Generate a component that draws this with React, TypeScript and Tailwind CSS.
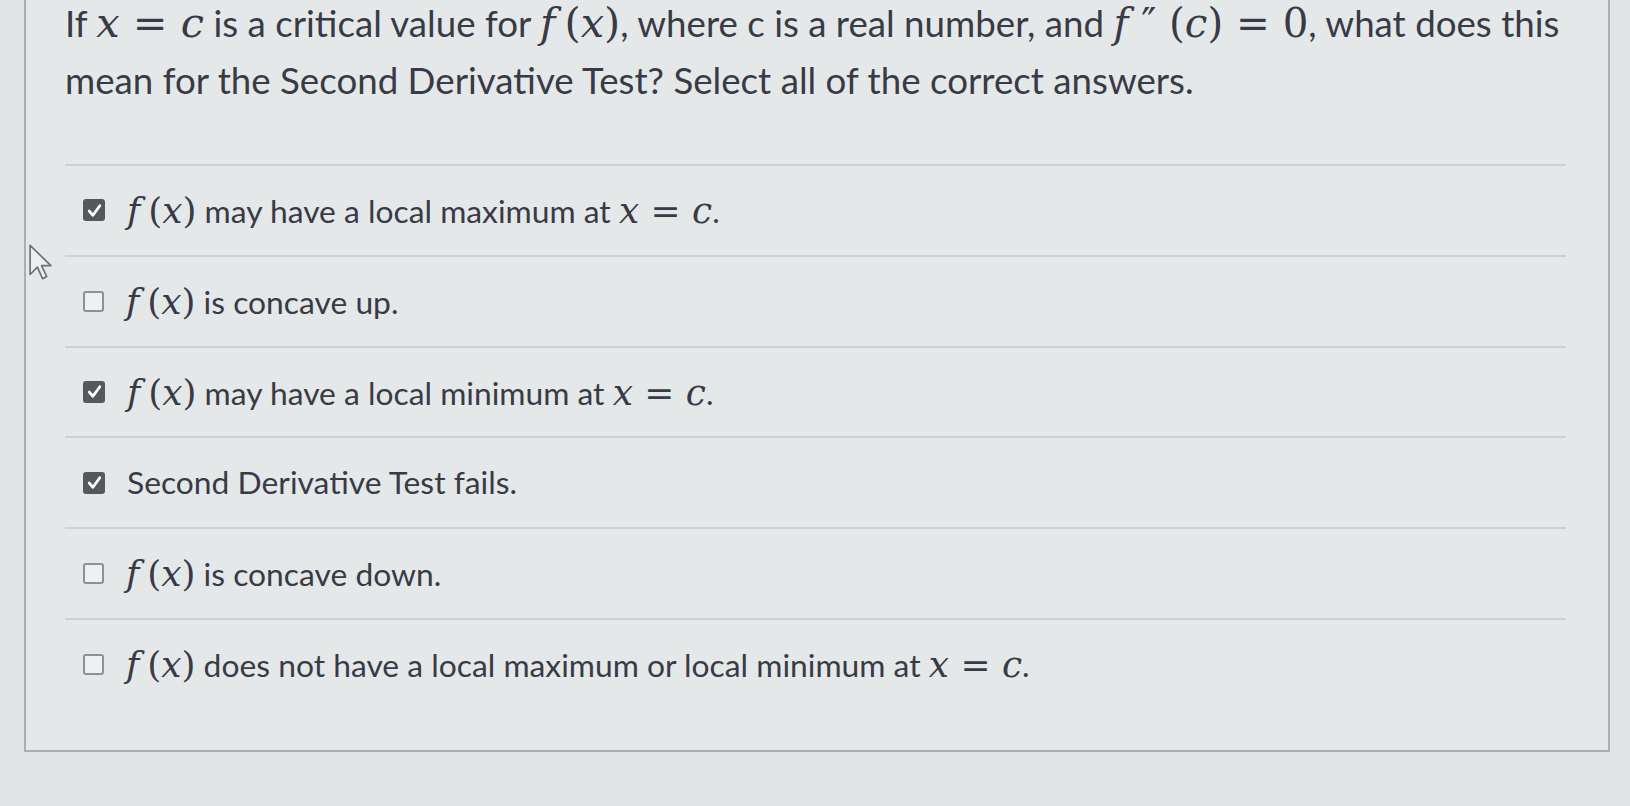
import React from "react";

const sans = "font-['Lato','Noto_Sans',sans-serif]";

function V({ children }: { children: React.ReactNode }) {
  return <span className="font-['DejaVu_Serif','Liberation_Serif',serif] italic">{children}</span>;
}

function Up({ children }: { children: React.ReactNode }) {
  return <span className="font-['DejaVu_Serif','Liberation_Serif',serif]">{children}</span>;
}

function Fx() {
  return (
    <span className="whitespace-nowrap text-[1.13em]">
      <V>f</V>
      <span className="inline-block w-[0.22em]" />
      <Up>(</Up>
      <V>x</V>
      <Up>)</Up>
    </span>
  );
}

function XeqC() {
  return (
    <span className="whitespace-nowrap text-[1.13em]">
      <V>x</V>
      <Up> = </Up>
      <V>c</V>
    </span>
  );
}

function Checkbox({ checked }: { checked: boolean }) {
  if (checked) {
    return (
      <span className="flex h-[22px] w-[22px] shrink-0 items-center justify-center rounded-[3px] bg-[#55595e]">
        <svg viewBox="0 0 16 16" className="h-[17px] w-[17px]">
          <path d="M3 8.5 L6.5 12.5 L13 3.5" fill="none" stroke="#ffffff" strokeWidth="2.6" strokeLinecap="round" strokeLinejoin="round" />
        </svg>
      </span>
    );
  }
  return <span className="h-[21px] w-[21px] shrink-0 rounded-[3px] border-2 border-[#8d9196] bg-[#eef0f1]" />;
}

const options: { checked: boolean; label: React.ReactNode }[] = [
  {
    checked: true,
    label: (
      <>
        <Fx /> may have a local maximum at <XeqC />.
      </>
    ),
  },
  {
    checked: false,
    label: (
      <>
        <Fx /> is concave up.
      </>
    ),
  },
  {
    checked: true,
    label: (
      <>
        <Fx /> may have a local minimum at <XeqC />.
      </>
    ),
  },
  { checked: true, label: <>Second Derivative Test fails.</> },
  {
    checked: false,
    label: (
      <>
        <Fx /> is concave down.
      </>
    ),
  },
  {
    checked: false,
    label: (
      <>
        <Fx /> does not have a local maximum or local minimum at <XeqC />.
      </>
    ),
  },
];

export default function App() {
  return (
    <div className={`relative h-[806px] w-[1630px] overflow-hidden bg-[#e1e4e5] ${sans}`}>
      <div className="ml-[24px] mr-[20px] h-[759px] border-x-2 border-b-2 border-[#a9aeb4] bg-[#e5e8e9] pl-[39px] pr-[20px]">
        <p className="-mt-[7px] whitespace-nowrap text-[36.7px] leading-[57px] text-[#383b46]">
          If <XeqC /> is a critical value for <Fx />, where c is a real number, and{" "}
          <span className="whitespace-nowrap text-[1.1em]">
            <V>f</V>
            <Up> ″ </Up>
            <Up>(</Up>
            <V>c</V>
            <Up>) = 0</Up>
          </span>
          , what does this
          <br />
          mean for the Second Derivative Test? Select all of the correct answers.
        </p>

        <div className="mr-[22px] mt-[55px]">
          {options.map((o, i) => (
            <div
              key={i}
              className="flex h-[90.8px] items-center gap-[22px] border-t-2 border-[#cdd0d2] pl-[18px] text-[31.8px] text-[#383b46]"
            >
              <Checkbox checked={o.checked} />
              <span>{o.label}</span>
            </div>
          ))}
        </div>
      </div>

      {/* mouse pointer */}
      <svg viewBox="0 0 24 36" className="absolute left-[28px] top-[243px] h-[38px] w-[25px]">
        <path
          d="M2 2 L2 30 L9 23 L14 34 L18 32 L13 21.5 L22 21.5 Z"
          fill="#eceeef"
          stroke="#6c7075"
          strokeWidth="1.6"
          strokeLinejoin="round"
        />
      </svg>
    </div>
  );
}
